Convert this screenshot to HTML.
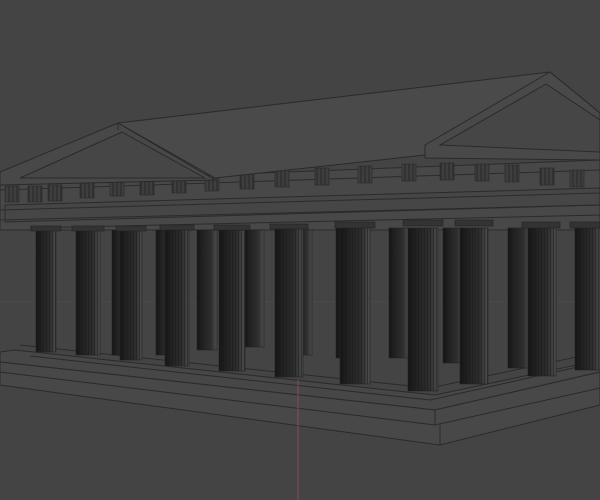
<!DOCTYPE html>
<html><head><style>
html,body{margin:0;padding:0;background:#444;width:600px;height:500px;overflow:hidden}
</style></head><body>
<svg width="600" height="500" viewBox="0 0 600 500" xmlns="http://www.w3.org/2000/svg">
<defs>
<linearGradient id="c" x1="0" x2="1" y1="0" y2="0">
<stop offset="0" stop-color="#151515"/><stop offset="0.3" stop-color="#222"/><stop offset="0.7" stop-color="#2e2e2e"/><stop offset="1" stop-color="#4e4e4e"/>
</linearGradient>
<pattern id="f" width="3" height="10" patternUnits="userSpaceOnUse">
<rect width="3" height="10" fill="none"/><line x1="1.5" y1="0" x2="1.5" y2="10" stroke="#1a1a1a" stroke-width="0.5"/>
</pattern>
<pattern id="tg" width="4" height="10" patternUnits="userSpaceOnUse">
<rect width="4" height="10" fill="#3e3e3e"/><line x1="1" y1="0" x2="1" y2="10" stroke="#222" stroke-width="0.8"/>
</pattern>
</defs>
<rect width="600" height="500" fill="#444"/>
<line x1="0" y1="302" x2="600" y2="302" stroke="#4c4a40" stroke-width="1"/>
<g stroke="#2a2a2a" stroke-width="1" fill="none">
<polygon points="0,352 15,350 435,395 600,360 600,372 435,410 0,362" fill="#474747"/>
<polygon points="0,362 435,410 600,372 600,405 440,445 0,385" fill="#484848"/>
<polyline points="0,372 435,425 600,388"/>
<line x1="435" y1="410" x2="435" y2="425"/>
<line x1="440" y1="425" x2="440" y2="445"/>
<polyline points="20,345 430,388 600,352"/>
<polyline points="30,356 430,400 600,362"/>
</g>
<line x1="298" y1="380" x2="298" y2="500" stroke="#8a4a5a" stroke-width="1"/>
<g stroke="#2b2b2b" stroke-width="1">
<polygon points="0,183 600,160 600,230 0,230" fill="#484848"/>
<polygon points="5,205 600,188 600,205 5,222" fill="#464646"/>
<polyline points="0,190 600,170" fill="none"/>
<polyline points="0,210 600,193" fill="none"/>
<polyline points="0,220 600,205" fill="none"/>
<polyline points="30,228 600,215" fill="none"/>
</g>
<g fill="url(#tg)" stroke="#2a2a2a" stroke-width="0.6">
<rect x="5" y="186" width="14" height="16"/><rect x="28" y="186" width="14" height="16"/><rect x="48" y="185" width="14" height="16"/><rect x="80" y="181" width="14" height="17"/><rect x="110" y="179" width="14" height="17"/><rect x="140" y="178" width="14" height="17"/><rect x="172" y="176" width="14" height="17"/><rect x="205" y="174" width="14" height="17"/><rect x="240" y="172" width="14" height="17"/><rect x="275" y="170" width="14" height="17"/><rect x="315" y="168" width="14" height="17"/><rect x="358" y="166" width="14" height="17"/><rect x="402" y="164" width="14" height="17"/><rect x="440" y="163" width="14" height="17"/><rect x="475" y="164" width="14" height="17"/><rect x="505" y="165" width="14" height="17"/><rect x="540" y="168" width="14" height="17"/><rect x="570" y="170" width="14" height="17"/>
</g>
<g stroke="#2a2a2a" stroke-width="1">
<polygon points="118,123 550,72 600,113 600,125 425,155 215,178" fill="#4a4a4a"/>
<polygon points="118,123 0,172 0,185 215,180" fill="#484848"/>
<polygon points="122,132 20,178 205,178" fill="#464646"/>
<polygon points="550,72 425,145 425,158 600,160 600,113" fill="#494949"/>
<polygon points="546,84 440,145 600,152 600,120" fill="#464646"/>
<line x1="425" y1="145" x2="425" y2="158"/>
<line x1="118" y1="123" x2="118" y2="130"/>
</g>
<g id="back" stroke="#222" stroke-width="0.6">
<rect x="112" y="230" width="18" height="125" fill="url(#c)"/><rect x="156" y="230" width="18" height="125" fill="url(#c)"/><rect x="197" y="230" width="20" height="120" fill="url(#c)"/><rect x="244" y="230" width="20" height="117" fill="url(#c)"/><rect x="294" y="230" width="18" height="125" fill="url(#c)"/><rect x="336" y="228" width="20" height="130" fill="url(#c)"/><rect x="389" y="228" width="20" height="130" fill="url(#c)"/><rect x="443" y="228" width="20" height="135" fill="url(#c)"/><rect x="508" y="228" width="22" height="140" fill="url(#c)"/>
</g>
<g stroke="#222" stroke-width="0.6" fill="url(#c)">
<rect x="36" y="230" width="20" height="122"/><rect x="76" y="230" width="24" height="125"/><rect x="120" y="230" width="22" height="130"/><rect x="165" y="230" width="24" height="136"/><rect x="219" y="230" width="26" height="141"/><rect x="275" y="229" width="28" height="148"/><rect x="340" y="228" width="30" height="156"/><rect x="408" y="228" width="30" height="163"/><rect x="460" y="228" width="28" height="156"/><rect x="528" y="228" width="28" height="148"/><rect x="575" y="228" width="25" height="142"/>
</g>
<g stroke="none" fill="url(#f)">
<rect x="36" y="230" width="20" height="122"/><rect x="76" y="230" width="24" height="125"/><rect x="120" y="230" width="22" height="130"/><rect x="165" y="230" width="24" height="136"/><rect x="219" y="230" width="26" height="141"/><rect x="275" y="229" width="28" height="148"/><rect x="340" y="228" width="30" height="156"/><rect x="408" y="228" width="30" height="163"/><rect x="460" y="228" width="28" height="156"/><rect x="528" y="228" width="28" height="148"/><rect x="575" y="228" width="25" height="142"/>
</g>
<g fill="#333" stroke="#222" stroke-width="0.6">
<rect x="31" y="226" width="30" height="5"/><rect x="72" y="226" width="32" height="5"/><rect x="116" y="226" width="30" height="5"/><rect x="160" y="225" width="34" height="5"/><rect x="214" y="225" width="36" height="5"/><rect x="270" y="224" width="38" height="5"/><rect x="335" y="222" width="40" height="6"/><rect x="403" y="220" width="40" height="6"/><rect x="455" y="220" width="38" height="6"/><rect x="522" y="222" width="38" height="6"/><rect x="570" y="222" width="30" height="6"/>
</g>
</svg>
</body></html>
